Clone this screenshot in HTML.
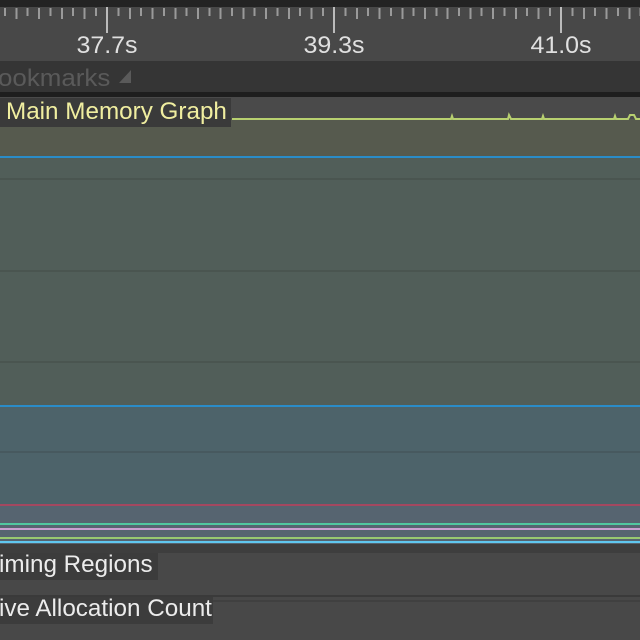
<!DOCTYPE html>
<html><head><meta charset="utf-8"><style>
*{margin:0;padding:0;box-sizing:border-box}
body{width:640px;height:640px;overflow:hidden;background:#484848;font-family:"Liberation Sans",sans-serif;position:relative}
div{position:absolute}
.l{left:0;width:640px}
.lab{font-size:24px;color:#e0e0e0;top:32px;transform:scaleX(1.04);transform-origin:center;white-space:nowrap}
</style></head><body>
<div class="l" style="top:0;height:7px;background:#232323"></div>
<div class="l" style="top:7px;height:54px;background:#484848"></div>
<div class="l" style="top:8px;height:8px;background:repeating-linear-gradient(90deg,transparent 0 4px,#9a9a9a 4px 6px,transparent 6px 22.7px);background-position:0 0"></div>
<div class="l" style="top:8px;height:11px;background:repeating-linear-gradient(90deg,transparent 0 15.35px,#9a9a9a 15.35px 17.35px,transparent 17.35px 22.7px)"></div>
<div style="left:106px;top:7px;width:2px;height:26px;background:#bbb"></div>
<div style="left:333px;top:7px;width:2px;height:26px;background:#bbb"></div>
<div style="left:560px;top:7px;width:2px;height:26px;background:#bbb"></div>
<div class="lab" style="left:67px;width:80px;text-align:center">37.7s</div>
<div class="lab" style="left:294px;width:80px;text-align:center">39.3s</div>
<div class="lab" style="left:521px;width:80px;text-align:center">41.0s</div>
<div class="l" style="top:61px;height:31px;background:#353535"></div>
<div style="left:-2px;top:65px;font-size:24px;color:#5a5a5a;white-space:nowrap;transform:scaleX(1.08);transform-origin:left">ookmarks</div>
<svg style="position:absolute;left:117px;top:69px" width="16" height="16"><polygon points="14,1 14,14 2,14" fill="#5a5a5a"/></svg>
<div class="l" style="top:92px;height:5px;background:#1e1e1e"></div>
<div class="l" style="top:97px;height:22px;background:#4a4a4a"></div>
<div class="l" style="top:119px;height:37px;background:#565a4e"></div>
<div class="l" style="top:156px;height:250px;background:#515e59"></div>
<div class="l" style="top:406px;height:99px;background:#4d636a"></div>
<div class="l" style="top:505px;height:39px;background:#566470"></div>
<div class="l" style="top:156px;height:2px;background:#2a8cc8"></div>
<div class="l" style="top:178px;height:2px;background:#4a5550"></div>
<div class="l" style="top:270px;height:2px;background:#4a5550"></div>
<div class="l" style="top:361px;height:2px;background:#4a5550"></div>
<div class="l" style="top:405px;height:2px;background:#2a8cc8"></div>
<div class="l" style="top:451px;height:2px;background:#47595f"></div>
<div class="l" style="top:504px;height:2px;background:#a44860"></div>
<div class="l" style="top:523px;height:2px;background:#50c8a0"></div>
<div class="l" style="top:528px;height:2px;background:#c8a0d0"></div>
<div class="l" style="top:537px;height:2px;background:#98c870"></div>
<div class="l" style="top:541px;height:2px;background:#60c8f0"></div>
<div class="l" style="top:544px;height:9px;background:#3e3e3e"></div>
<svg style="position:absolute;left:0;top:100px" width="640" height="30">
<polyline fill="none" stroke="#b8d070" stroke-width="2" points="232,19 451,19 452,16 453,19 508,19 509,15 511,19 542,19 543,16 544,19 614,19 615,16 616,19 628,19 630,15 634,15 636,19 640,19"/>
</svg>
<div style="left:0;top:98px;width:231px;height:29px;background:#3a3a3a"></div>
<div style="left:6px;top:98px;font-size:24px;color:#f0eea0;white-space:nowrap;transform:scaleX(1.01);transform-origin:left">Main Memory Graph</div>
<div style="left:0;top:553px;width:158px;height:27px;background:#3c3c3c"></div>
<div style="left:-1px;top:551px;font-size:24px;color:#ececec;white-space:nowrap;transform:scaleX(1.01);transform-origin:left">iming Regions</div>
<div class="l" style="top:595px;height:2px;background:#3a3a3a"></div>
<div class="l" style="top:600px;height:2px;background:#404040"></div>
<div style="left:0;top:597px;width:213px;height:27px;background:#3c3c3c"></div>
<div style="left:-1px;top:595px;font-size:24px;color:#ececec;white-space:nowrap;transform:scaleX(1.01);transform-origin:left">ive Allocation Count</div>
</body></html>
